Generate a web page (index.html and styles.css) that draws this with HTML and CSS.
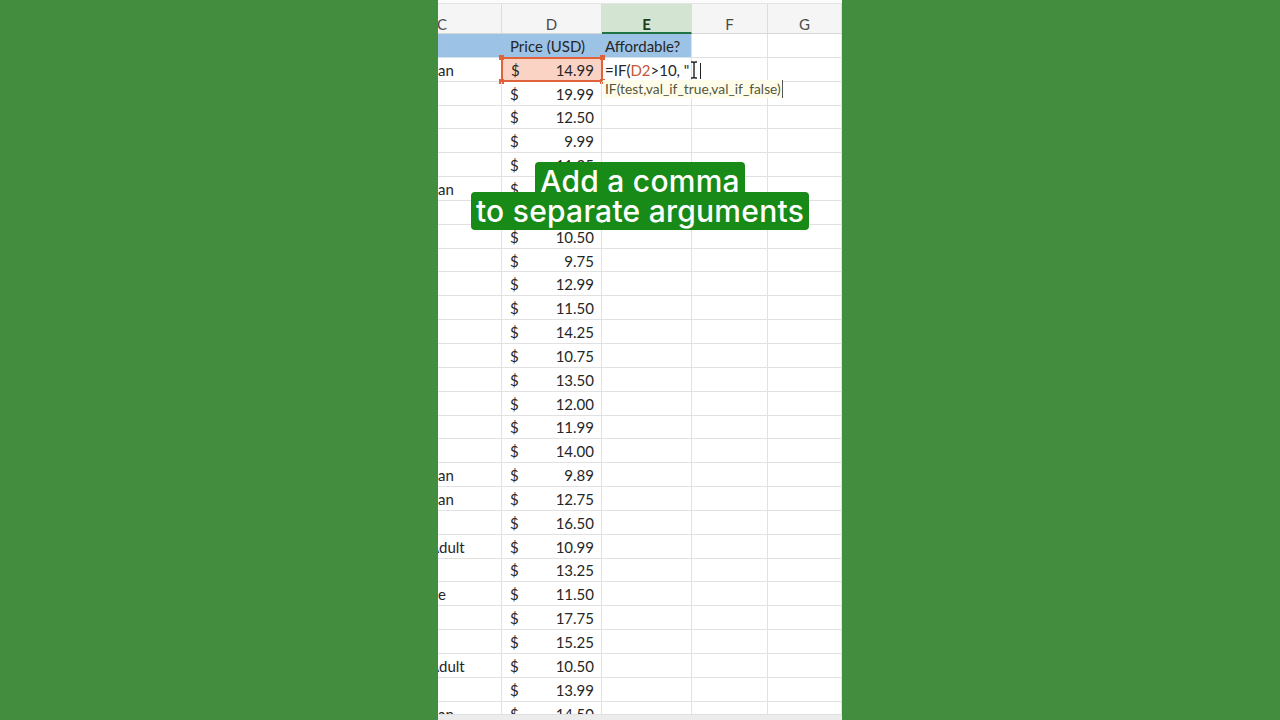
FILE: index.html
```html
<!DOCTYPE html>
<html>
<head>
<meta charset="utf-8">
<link rel="stylesheet" href="styles.css">
</head>
<body>
<div class="stage">
  <div class="sheet">
    <div class="topstrip"></div>
    <div class="row colhead">
      <div class="cell">C</div>
      <div class="cell">D</div>
      <div class="cell active">E</div>
      <div class="cell">F</div>
      <div class="cell">G</div>
    </div>
    <div class="row titles">
      <div class="cell blue"></div>
      <div class="cell blue"><span class="hdr">Price (USD)</span></div>
      <div class="cell blue"><span class="hdr2">Affordable?</span></div>
      <div class="cell"></div>
      <div class="cell"></div>
    </div>
    <div class="row">
      <div class="cell c"><span>an</span></div>
      <div class="cell d sel"><span class="dol">$</span><span>14.99</span><i class="h tl"></i><i class="h tr"></i><i class="h bl"></i><i class="h br"></i></div>
      <div class="cell e"><span class="formula">=IF(<span class="ref">D2</span>&gt;10, "</span></div>
      <div class="cell"></div>
      <div class="cell"></div>
    </div>
    <div class="row"><div class="cell c"></div><div class="cell d"><span class="dol">$</span><span>19.99</span></div><div class="cell"></div><div class="cell"></div><div class="cell"></div></div>
    <div class="row"><div class="cell c"></div><div class="cell d"><span class="dol">$</span><span>12.50</span></div><div class="cell"></div><div class="cell"></div><div class="cell"></div></div>
    <div class="row"><div class="cell c"></div><div class="cell d"><span class="dol">$</span><span>9.99</span></div><div class="cell"></div><div class="cell"></div><div class="cell"></div></div>
    <div class="row"><div class="cell c"></div><div class="cell d"><span class="dol">$</span><span>11.25</span></div><div class="cell"></div><div class="cell"></div><div class="cell"></div></div>
    <div class="row"><div class="cell c"><span>an</span></div><div class="cell d"><span class="dol">$</span><span>13.75</span></div><div class="cell"></div><div class="cell"></div><div class="cell"></div></div>
    <div class="row"><div class="cell c"></div><div class="cell d"><span class="dol">$</span><span>12.25</span></div><div class="cell"></div><div class="cell"></div><div class="cell"></div></div>
    <div class="row"><div class="cell c"></div><div class="cell d"><span class="dol">$</span><span>10.50</span></div><div class="cell"></div><div class="cell"></div><div class="cell"></div></div>
    <div class="row"><div class="cell c"></div><div class="cell d"><span class="dol">$</span><span>9.75</span></div><div class="cell"></div><div class="cell"></div><div class="cell"></div></div>
    <div class="row"><div class="cell c"></div><div class="cell d"><span class="dol">$</span><span>12.99</span></div><div class="cell"></div><div class="cell"></div><div class="cell"></div></div>
    <div class="row"><div class="cell c"></div><div class="cell d"><span class="dol">$</span><span>11.50</span></div><div class="cell"></div><div class="cell"></div><div class="cell"></div></div>
    <div class="row"><div class="cell c"></div><div class="cell d"><span class="dol">$</span><span>14.25</span></div><div class="cell"></div><div class="cell"></div><div class="cell"></div></div>
    <div class="row"><div class="cell c"></div><div class="cell d"><span class="dol">$</span><span>10.75</span></div><div class="cell"></div><div class="cell"></div><div class="cell"></div></div>
    <div class="row"><div class="cell c"></div><div class="cell d"><span class="dol">$</span><span>13.50</span></div><div class="cell"></div><div class="cell"></div><div class="cell"></div></div>
    <div class="row"><div class="cell c"></div><div class="cell d"><span class="dol">$</span><span>12.00</span></div><div class="cell"></div><div class="cell"></div><div class="cell"></div></div>
    <div class="row"><div class="cell c"></div><div class="cell d"><span class="dol">$</span><span>11.99</span></div><div class="cell"></div><div class="cell"></div><div class="cell"></div></div>
    <div class="row"><div class="cell c"></div><div class="cell d"><span class="dol">$</span><span>14.00</span></div><div class="cell"></div><div class="cell"></div><div class="cell"></div></div>
    <div class="row"><div class="cell c"><span>an</span></div><div class="cell d"><span class="dol">$</span><span>9.89</span></div><div class="cell"></div><div class="cell"></div><div class="cell"></div></div>
    <div class="row"><div class="cell c"><span>an</span></div><div class="cell d"><span class="dol">$</span><span>12.75</span></div><div class="cell"></div><div class="cell"></div><div class="cell"></div></div>
    <div class="row"><div class="cell c"></div><div class="cell d"><span class="dol">$</span><span>16.50</span></div><div class="cell"></div><div class="cell"></div><div class="cell"></div></div>
    <div class="row"><div class="cell c"><span class="cut">Adult</span></div><div class="cell d"><span class="dol">$</span><span>10.99</span></div><div class="cell"></div><div class="cell"></div><div class="cell"></div></div>
    <div class="row"><div class="cell c"></div><div class="cell d"><span class="dol">$</span><span>13.25</span></div><div class="cell"></div><div class="cell"></div><div class="cell"></div></div>
    <div class="row"><div class="cell c"><span>e</span></div><div class="cell d"><span class="dol">$</span><span>11.50</span></div><div class="cell"></div><div class="cell"></div><div class="cell"></div></div>
    <div class="row"><div class="cell c"></div><div class="cell d"><span class="dol">$</span><span>17.75</span></div><div class="cell"></div><div class="cell"></div><div class="cell"></div></div>
    <div class="row"><div class="cell c"></div><div class="cell d"><span class="dol">$</span><span>15.25</span></div><div class="cell"></div><div class="cell"></div><div class="cell"></div></div>
    <div class="row"><div class="cell c"><span class="cut">Adult</span></div><div class="cell d"><span class="dol">$</span><span>10.50</span></div><div class="cell"></div><div class="cell"></div><div class="cell"></div></div>
    <div class="row"><div class="cell c"></div><div class="cell d"><span class="dol">$</span><span>13.99</span></div><div class="cell"></div><div class="cell"></div><div class="cell"></div></div>
    <div class="row"><div class="cell c"><span>an</span></div><div class="cell d"><span class="dol">$</span><span>14.50</span></div><div class="cell"></div><div class="cell"></div><div class="cell"></div></div>

    <div class="scrollbar"></div>

    <svg class="ibeam" width="8" height="18" viewBox="0 0 8 18"><path d="M1 1h2l1 1 1-1h2M4 2v14M1 17h2l1-1 1 1h2" fill="none" stroke="#222" stroke-width="1.4"/></svg>
    <div class="caret"></div>
    <div class="tooltip">IF(test,val_if_true,val_if_false)</div>

    <div class="caption">
      <div class="cap-line">Add a comma</div>
      <div class="cap-line second">to separate arguments</div>
    </div>
  </div>
</div>
</body>
</html>
```

FILE: styles.css
```css
* { box-sizing: border-box; }
html, body { margin: 0; padding: 0; }
body {
  background: #438e3e;
  width: 1280px;
  height: 720px;
  overflow: hidden;
}
.stage {
  display: flex;
  justify-content: center;
  height: 720px;
}
.sheet {
  position: relative;
  width: 404px;
  height: 720px;
  background: #ffffff;
  overflow: hidden;
  font-family: Lato, "Open Sans", sans-serif;
  font-size: 15px;
  color: #262626;
}
.topstrip {
  height: 4px;
  background: #fbfbfb;
  border-bottom: 1px solid #e3e3e3;
}
.row {
  display: grid;
  grid-template-columns: 64px 100px 90px 76px 74px;
  height: 23.85px;
}
.cell {
  border-right: 1px solid #e1e1e1;
  border-bottom: 1px solid #e1e1e1;
  display: flex;
  align-items: center;
  overflow: hidden;
  white-space: nowrap;
  position: relative;
  padding-top: 1px;
}
.colhead {
  height: 30px;
  background: #f5f5f5;
}
.colhead .cell {
  justify-content: center;
  color: #4a4a4a;
  font-size: 15px;
  padding-top: 10px;
  border-right-color: #dcdcdc;
  border-bottom: 1px solid #d6d6d6;
}
.colhead .cell:first-child {
  justify-content: flex-start;
  padding-left: 0;
  margin-left: -1px;
}
.colhead .active {
  background: #d3e4d3;
  font-weight: 700;
  color: #1f3d1f;
  border-bottom: 2px solid #217346;
  padding-top: 11px;
}
.titles .blue {
  background: #9cc3e6;
  border-right-color: #9cc3e6;
  border-bottom-color: #d8e3ee;
}
.titles .blue:nth-child(3) { border-right-color: #e1e1e1; }
.hdr { padding-left: 8px; }
.hdr2 { padding-left: 3px; }
.c .cut { margin-left: -9px; }
.d {
  justify-content: space-between;
  padding: 1px 7px 0 8px;
}
.sel {
  background: #fbd3c5;
  border: 2px solid #e0623b;
  margin-top: -1px;
  height: calc(100% + 1px);
  margin-left: -1px;
  width: calc(100% + 2px);
  overflow: visible;
}
.h {
  position: absolute;
  width: 5px;
  height: 5px;
  background: #e0623b;
}
.h.tl { left: -4px; top: -4px; }
.h.tr { right: -4px; top: -4px; }
.h.bl { left: -4px; bottom: -4px; }
.h.br { right: -4px; bottom: -4px; }
.e { overflow: visible; }
.formula {
  padding-left: 3px;
  position: relative;
  z-index: 2;
}
.ref { color: #c5553a; }
.ibeam {
  position: absolute;
  left: 252px;
  top: 61px;
  z-index: 3;
}
.caret {
  position: absolute;
  left: 262px;
  top: 63px;
  width: 1px;
  height: 16px;
  background: #222;
  z-index: 3;
}
.tooltip {
  position: absolute;
  left: 165px;
  top: 80px;
  height: 18px;
  padding: 0 1px 0 2px;
  background: #fdfde9;
  border-right: 1px solid #555;
  font-size: 13.8px;
  line-height: 18px;
  color: #55553f;
  z-index: 2;
}
.scrollbar {
  position: absolute;
  left: 0;
  right: 0;
  bottom: 0;
  height: 6px;
  background: #ececec;
  border-top: 1px solid #e0e0e0;
}
.caption {
  position: absolute;
  left: 0;
  right: 0;
  top: 162px;
  display: flex;
  flex-direction: column;
  align-items: center;
  z-index: 5;
  font-family: Inter, "Noto Sans", sans-serif;
  font-weight: 500;
  font-size: 30px;
  letter-spacing: 0.25px;
  color: #ffffff;
}
.cap-line {
  background: #178a17;
  border-radius: 4px;
  height: 38px;
  line-height: 38px;
  padding: 0 5px;
}
.cap-line.second {
  margin-top: -8px;
}
```
